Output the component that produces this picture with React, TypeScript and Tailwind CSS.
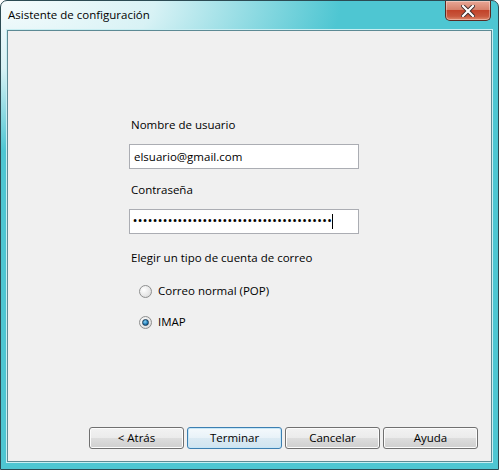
import { useState } from "react";

const font = { fontFamily: '"Open Sans", "Noto Sans", sans-serif' };

const WizardButton = ({
  label,
  primary = false,
}: {
  label: string;
  primary?: boolean;
}) => {
  return (
    <button
      type="button"
      className={
        primary
          ? "w-[95px] h-[22px] rounded-[3px] border border-[#3c7fb1] bg-[linear-gradient(to_bottom,#f4f9fc_0%,#e8f2f8_49%,#dbeaf3_50%,#d0e4f0_100%)] text-[11.5px] text-black shadow-[inset_0_0_0_1px_#c6e6f7]"
          : "w-[95px] h-[22px] rounded-[3px] border border-[#707070] bg-[linear-gradient(to_bottom,#f2f2f2_0%,#ebebeb_49%,#dddddd_50%,#cfcfcf_100%)] text-[11.5px] text-black shadow-[inset_0_0_0_1px_#fcfcfc]"
      }
    >
      {label}
    </button>
  );
};

const Radio = ({
  label,
  checked,
  onClick,
}: {
  label: string;
  checked: boolean;
  onClick: () => void;
}) => {
  return (
    <div className="flex items-center h-[20px] pl-[10px] cursor-default" onClick={onClick}>
      <span className="w-[13px] h-[13px] rounded-full border border-[#8e8f8f] bg-[radial-gradient(circle_at_35%_35%,#ffffff_0%,#e6e6e6_60%,#cfcfcf_100%)] flex items-center justify-center">
        {checked ? (
          <span className="w-[7px] h-[7px] rounded-full bg-[radial-gradient(circle_at_40%_35%,#8ad4f5_0%,#1f78b4_60%,#0d3e62_100%)] border border-[#1b3e5a]"></span>
        ) : null}
      </span>
      <span className="ml-[6px] text-[11.5px] text-black">{label}</span>
    </div>
  );
};

export default function App() {
  const [accountType, setAccountType] = useState("imap");
  const dots = "\u2022".repeat(40);

  return (
    <div
      className="w-[499px] h-[470px] flex flex-col rounded-t-[7px] border border-[#2c4b53] bg-[radial-gradient(ellipse_340px_150px_at_0%_0%,#f6fcfd_0%,#d8f2f5_45%,#4ec6d2_100%)] overflow-hidden"
      style={font}
    >
      <div className="h-[29px] flex items-start justify-between relative">
        <span className="pl-[7px] pt-[6px] text-[11.5px] text-black leading-[16px]">
          Asistente de configuración
        </span>
        <div className="mr-[7px] w-[46px] h-[20px] rounded-b-[5px] border border-t-0 border-[#5a2a22] bg-[linear-gradient(to_bottom,#e8a796_0%,#d6826c_45%,#c2432a_50%,#c8573d_80%,#e08a6c_100%)] flex items-center justify-center shadow-[inset_0_0_0_1px_rgba(255,255,255,0.35)]">
          <svg width="14" height="12" viewBox="0 0 14 12">
            <path
              d="M2 1 L12 11 M12 1 L2 11"
              stroke="#3b2a2a"
              strokeWidth="4"
              strokeLinecap="square"
            />
            <path
              d="M2 1 L12 11 M12 1 L2 11"
              stroke="#ffffff"
              strokeWidth="2.2"
              strokeLinecap="square"
            />
          </svg>
        </div>
      </div>

      <div className="flex-1 mx-[6px] mb-[7px] border border-[#5c8a94] shadow-[0_0_0_1px_#c8eef2]">
        <div className="h-full bg-[#f0f0f0] flex flex-col">
          <div className="ml-[121px] w-[230px] pt-[86px] flex flex-col text-[11.5px] text-black">
            <span className="pl-[2px] h-[16px] leading-[16px]">Nombre de usuario</span>
            <div className="mt-[11px] h-[25px] border border-[#abadb3] bg-white flex items-center pl-[4px]">
              elsuario@gmail.com
            </div>
            <span className="mt-[13px] pl-[2px] h-[16px] leading-[16px]">Contraseña</span>
            <div className="mt-[11px] h-[25px] border border-[#abadb3] bg-white flex items-center pl-[3px]">
              <span className="tracking-[0.85px] text-[11px] font-semibold">{dots}</span>
              <span className="ml-[0px] w-[1px] h-[15px] bg-black"></span>
            </div>
            <span className="mt-[16px] pl-[2px] h-[16px] leading-[16px]">
              Elegir un tipo de cuenta de correo
            </span>
            <div className="mt-[15px] flex flex-col gap-[11px]">
              <Radio
                label="Correo normal (POP)"
                checked={accountType === "pop"}
                onClick={() => setAccountType("pop")}
              />
              <Radio
                label="IMAP"
                checked={accountType === "imap"}
                onClick={() => setAccountType("imap")}
              />
            </div>
          </div>

          <div className="mt-auto flex justify-end gap-[3px] pr-[13px] pb-[12px]">
            <WizardButton label="< Atrás" />
            <WizardButton label="Terminar" primary />
            <WizardButton label="Cancelar" />
            <WizardButton label="Ayuda" />
          </div>
        </div>
      </div>
    </div>
  );
}
